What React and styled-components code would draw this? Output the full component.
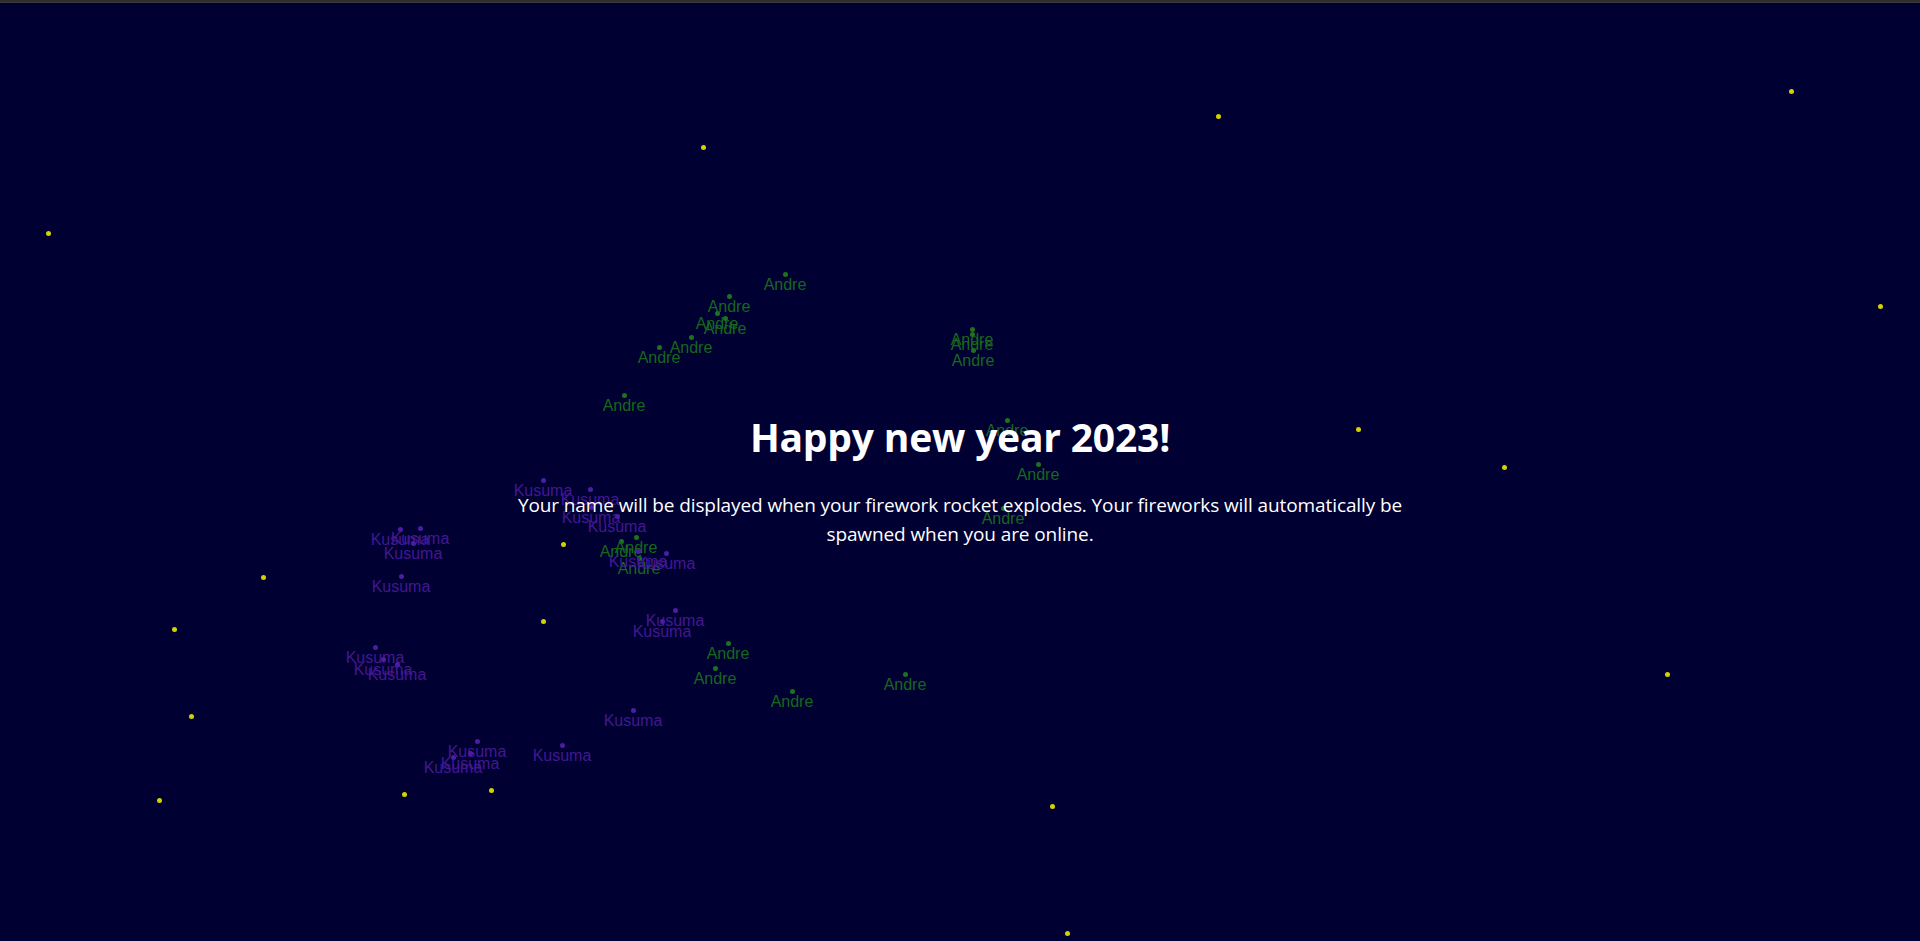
import React from "react";
import styled, { createGlobalStyle } from "styled-components";

const GlobalStyle = createGlobalStyle`
  html, body {
    margin: 0;
    padding: 0;
    background: #000033;
    overflow: hidden;
  }
  #root {
    min-height: 100vh;
  }
`;

const Page = styled.div`
  display: flex;
  flex-direction: column;
  width: 100vw;
  height: 100vh;
  background: #000033;
`;

const TopEdge = styled.div`
  height: 2px;
  flex: 0 0 2px;
  background: #2e2e2e;
  border-bottom: 1px solid #3a3a3a;
`;

const Sky = styled.main`
  position: relative;
  flex: 1;
  overflow: hidden;
  display: flex;
  flex-direction: column;
  align-items: center;
  padding-top: 408px;
`;

/* free canvas holding stars and exploded sparks */
const Canvas = styled.div`
  position: absolute;
  inset: 0;
  top: -3px;
  pointer-events: none;
`;

const Star = styled.span`
  position: absolute;
  width: 5px;
  height: 5px;
  margin: -2.5px 0 0 -2.5px;
  border-radius: 50%;
  background: #d2d200;
`;

const SparkDot = styled.span`
  position: absolute;
  width: 5px;
  height: 5px;
  margin: -2.5px 0 0 -2.5px;
  border-radius: 50%;
  background: ${(p) => p.$dot};
`;

const SparkName = styled.span`
  position: absolute;
  transform: translateX(-50%);
  white-space: nowrap;
  font-family: "Liberation Sans", Arial, sans-serif;
  font-size: 16px;
  line-height: 16px;
  color: ${(p) => p.$ink};
`;

const Title = styled.h1`
  position: relative;
  margin: 0;
  font-family: "Open Sans", "Noto Sans", sans-serif;
  font-weight: 700;
  font-size: 39px;
  letter-spacing: -0.2px;
  line-height: 52px;
  color: #ffffff;
  text-align: center;
`;

const Note = styled.p`
  position: relative;
  margin: 28px 0 0;
  max-width: 930px;
  font-family: "Open Sans", "Noto Sans", sans-serif;
  font-size: 19px;
  letter-spacing: -0.1px;
  line-height: 29px;
  color: #ffffff;
  text-align: center;
`;

const owners = {
  Andre: { dot: "#1b721f", ink: "#18661c" },
  Kusuma: { dot: "#4c1da3", ink: "#421891" },
};

const stars = [
  [48, 233], [703, 147], [1218, 116], [1791, 91], [1880, 306],
  [1358, 429], [1504, 467], [563, 544], [263, 577], [174, 629],
  [543, 621], [191, 716], [1667, 674], [159, 800], [404, 794],
  [491, 790], [1052, 806], [1067, 933],
];

const sparks = [
  [785, 274, "Andre"], [729, 296, "Andre"], [717, 313, "Andre"], [725, 318, "Andre"],
  [691, 337, "Andre"], [659, 347, "Andre"], [624, 395, "Andre"],
  [972, 329, "Andre"], [972, 334, "Andre"], [973, 350, "Andre"],
  [1007, 420, "Andre"], [1038, 464, "Andre"], [1003, 508, "Andre"],
  [621, 541, "Andre"], [636, 537, "Andre"], [639, 558, "Andre"],
  [728, 643, "Andre"], [715, 668, "Andre"], [792, 691, "Andre"], [905, 674, "Andre"],
  [543, 480, "Kusuma"], [590, 489, "Kusuma"], [591, 507, "Kusuma"], [617, 516, "Kusuma"],
  [400, 529, "Kusuma"], [420, 528, "Kusuma"], [413, 543, "Kusuma"], [401, 576, "Kusuma"],
  [638, 551, "Kusuma"], [666, 553, "Kusuma"],
  [675, 610, "Kusuma"], [662, 621, "Kusuma"],
  [375, 647, "Kusuma"], [383, 659, "Kusuma"], [397, 664, "Kusuma"],
  [633, 710, "Kusuma"], [477, 741, "Kusuma"], [470, 753, "Kusuma"],
  [453, 757, "Kusuma"], [562, 745, "Kusuma"],
];

export default function App() {
  return (
    <>
      <GlobalStyle />
      <Page>
        <TopEdge />
        <Sky>
          <Canvas>
            {stars.map(([x, y], i) => (
              <Star key={`s${i}`} style={{ left: x, top: y }} />
            ))}
            {sparks.map(([x, y, name], i) => (
              <React.Fragment key={`p${i}`}>
                <SparkDot $dot={owners[name].dot} style={{ left: x, top: y }} />
                <SparkName $ink={owners[name].ink} style={{ left: x, top: y + 3 }}>
                  {name}
                </SparkName>
              </React.Fragment>
            ))}
          </Canvas>
          <Title>Happy new year 2023!</Title>
          <Note>
            Your name will be displayed when your firework rocket explodes. Your
            fireworks will automatically be spawned when you are online.
          </Note>
        </Sky>
      </Page>
    </>
  );
}
